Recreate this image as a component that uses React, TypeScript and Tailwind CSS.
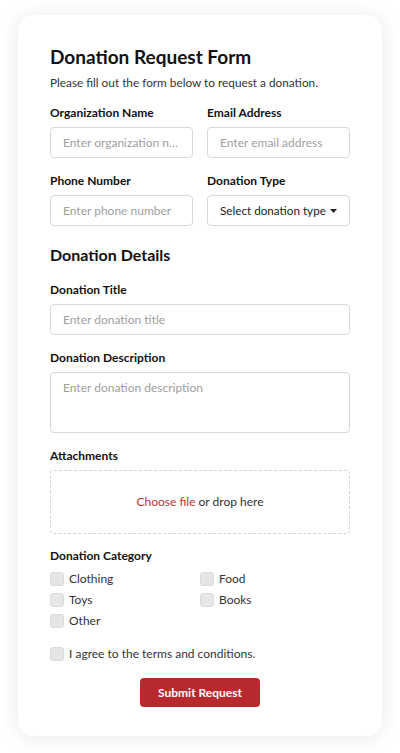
import React from "react";

function Label({ children }: { children: React.ReactNode }) {
  return <label className="block text-[12px] leading-[20px] font-bold text-[#111] mb-1">{children}</label>;
}

function Input({ placeholder }: { placeholder: string }) {
  return (
    <input
      placeholder={placeholder}
      className="w-full h-[31px] border border-[#d9d9d9] rounded-[4px] px-3 text-[12px] text-[#333] placeholder:text-[#a0a0a0] bg-white outline-none truncate"
    />
  );
}

function Check({ label }: { label: string }) {
  return (
    <div className="flex items-center gap-[5px] h-[21px]">
      <span className="w-[14px] h-[14px] rounded-[3px] bg-[#e6e6e6] border border-[#dadada] shrink-0" />
      <span className="text-[12px] text-[#333]">{label}</span>
    </div>
  );
}

export default function App() {
  return (
    <div className="min-h-[753px] bg-white pt-[15px] px-[18px] pb-4" style={{ fontFamily: "Lato, 'Open Sans', sans-serif" }}>
      <div className="bg-white rounded-2xl shadow-[0_2px_22px_rgba(0,0,0,0.09)] px-8 pt-[28px] pb-[29px]">
        <h1 className="text-[19px] leading-[28px] font-bold text-[#111]">Donation Request Form</h1>
        <p className="text-[11.8px] leading-[20px] text-[#333] mt-[2px]">Please fill out the form below to request a donation.</p>

        <div className="grid grid-cols-2 gap-x-[14px] gap-y-[13px] mt-[10px]">
          <div>
            <Label>Organization Name</Label>
            <Input placeholder="Enter organization name" />
          </div>
          <div>
            <Label>Email Address</Label>
            <Input placeholder="Enter email address" />
          </div>
          <div>
            <Label>Phone Number</Label>
            <Input placeholder="Enter phone number" />
          </div>
          <div>
            <Label>Donation Type</Label>
            <div className="h-[31px] border border-[#d9d9d9] rounded-[4px] px-3 flex items-center text-[11.7px] text-[#222] whitespace-nowrap">
              <span>Select donation type</span>
              <svg width="7" height="4" viewBox="0 0 7 4" className="ml-[4px] shrink-0">
                <path d="M0 0h7L3.5 4z" fill="#222" />
              </svg>
            </div>
          </div>
        </div>

        <h2 className="text-[16px] leading-[28px] font-bold text-[#111] mt-[15px]">Donation Details</h2>

        <div className="mt-[11px]">
          <Label>Donation Title</Label>
          <Input placeholder="Enter donation title" />
        </div>

        <div className="mt-[13px]">
          <Label>Donation Description</Label>
          <textarea
            placeholder="Enter donation description"
            className="w-full h-[61px] block border border-[#d9d9d9] rounded-[4px] px-3 py-[6px] text-[12px] text-[#333] placeholder:text-[#a0a0a0] resize-none outline-none"
          />
        </div>

        <div className="mt-[13px]">
          <Label>Attachments</Label>
          <div className="h-[64px] border border-dashed border-[#d4d4d4] rounded-[4px] flex items-center justify-center text-[12px] text-[#333]">
            <span className="text-[#c62f2f]">Choose file</span>
            <span>&nbsp;or drop here</span>
          </div>
        </div>

        <div className="mt-[12px]">
          <div className="text-[12px] leading-[20px] font-bold text-[#111]">Donation Category</div>
          <div className="grid grid-cols-2 mt-[2px]">
            <Check label="Clothing" />
            <Check label="Food" />
            <Check label="Toys" />
            <Check label="Books" />
            <Check label="Other" />
          </div>
        </div>

        <div className="mt-[12px]">
          <Check label="I agree to the terms and conditions." />
        </div>

        <div className="flex justify-center mt-[14px]">
          <button className="w-[120px] h-[29px] bg-[#b8292e] rounded-[4px] text-white text-[12px] font-bold">Submit Request</button>
        </div>
      </div>
    </div>
  );
}
